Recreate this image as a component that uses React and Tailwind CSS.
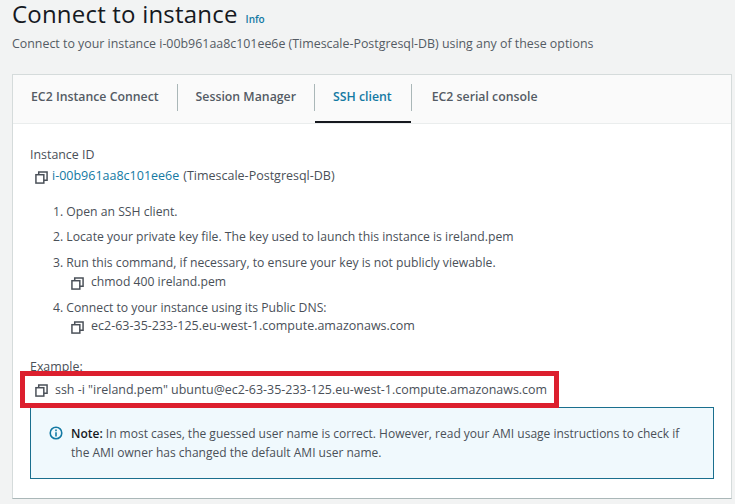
const F = { fontFamily: '"Open Sans", sans-serif' };

function CopyIcon({ className = "" }) {
  return (
    <svg viewBox="0 0 14 14" className={`w-[13px] h-[13px] shrink-0 ${className}`} fill="none" stroke="#4a5058" strokeWidth="1.6">
      <rect x="1" y="4" width="8.5" height="9" />
      <path d="M4 4V1h9v9h-3.5" />
    </svg>
  );
}

function CopyLine({ children, className = "" }) {
  return (
    <div className={`flex items-center gap-[7px] ml-[18px] h-[18px] ${className}`}>
      <CopyIcon className="mt-[2px]" />
      <span>{children}</span>
    </div>
  );
}

function Tab({ children, active, className = "px-[18px]" }) {
  return (
    <div className={`h-full flex items-center pb-[2px] border-b-2 text-[12.3px] font-semibold ${className} ${active ? "text-[#1379a3] border-[#16191f]" : "text-[#545b64] border-transparent"}`}>
      {children}
    </div>
  );
}

const Sep = () => <div className="w-px h-[27px] mb-[3px] bg-[#aab7b8]" />;

export default function App() {
  return (
    <div style={F} className="w-[735px] h-[504px] overflow-hidden bg-[#f2f3f3] text-[#545b64] text-[12.4px] pl-[12px] pr-[3px]">
      <div className="flex items-baseline h-[27px]">
        <h1 className="text-[24px] leading-[27px] text-[#16191f] tracking-[0.2px]">Connect to instance</h1>
        <a className="ml-[8px] text-[10px] font-semibold text-[#1379a3]">Info</a>
      </div>
      <p className="mt-[8px] leading-[17px] whitespace-nowrap">
        Connect to your instance i-00b961aa8c101ee6e (Timescale-Postgresql-DB) using any of these options
      </p>
      <div className="mt-[22px] h-[425px] bg-white border border-[#d5dbdb] border-b-[#aab7b8] flex flex-col">
        <div className="h-[49px] bg-[#fafafa] border-b border-[#eaeded] flex items-center shrink-0">
          <Tab>EC2 Instance Connect</Tab>
          <Sep />
          <Tab>Session Manager</Tab>
          <Sep />
          <Tab active className="pl-[18px] pr-[19px]">SSH client</Tab>
          <Sep />
          <Tab className="pl-[20px] pr-[18px]">EC2 serial console</Tab>
        </div>
        <div className="px-[17px] pt-[22px] flex-1 flex flex-col leading-[18px] text-[#4a5058]">
          <div>Instance ID</div>
          <div className="flex items-center gap-[4px] ml-[5px] mt-[3px] h-[18px] text-[12.5px]">
            <CopyIcon className="mt-[2px]" />
            <span className="text-[#1379a3]">i-00b961aa8c101ee6e</span>
            <span>(Timescale-Postgresql-DB)</span>
          </div>
          <ol className="ml-[23px] mt-[18px] flex flex-col gap-[7px] text-[12.2px]">
            <li>1. Open an SSH client.</li>
            <li>2. Locate your private key file. The key used to launch this instance is ireland.pem</li>
            <li className="mt-px">
              3. Run this command, if necessary, to ensure your key is not publicly viewable.
              <CopyLine className="mt-px">chmod 400 ireland.pem</CopyLine>
            </li>
            <li className="mt-px">
              4. Connect to your instance using its Public DNS:
              <CopyLine className="text-[12.5px]">ec2-63-35-233-125.eu-west-1.compute.amazonaws.com</CopyLine>
            </li>
          </ol>
          <div className="mt-[24px] h-[15px] leading-[15px]">Example:</div>
          <div className="relative z-10 -ml-[10px] w-[539px] h-[37px] border-[5px] border-[#dc1f2e] bg-white flex items-center pl-[10px] gap-[7px] -mt-[3px] text-[12.45px]">
            <CopyIcon className="mt-[2px]" />
            <span className="whitespace-nowrap">ssh -i "ireland.pem" ubuntu@ec2-63-35-233-125.eu-west-1.compute.amazonaws.com</span>
          </div>
          <div className="w-[684px] h-[72px] -mt-px border border-[#1a6f8e] bg-[#f0f9fd] flex pl-[18px] pt-[16px] gap-[8px] leading-[19px] text-[12px]">
            <svg viewBox="0 0 16 16" className="w-[14px] h-[14px] mt-[2px] shrink-0" fill="none" stroke="#1379a3" strokeWidth="1.8">
              <circle cx="8" cy="8" r="6.6" />
              <path d="M8 7v5M8 4v2" />
            </svg>
            <p className="w-[620px]">
              <b className="font-semibold text-[#16191f]">Note:</b> In most cases, the guessed user name is correct. However, read your AMI usage instructions to check if the AMI owner has changed the default AMI user name.
            </p>
          </div>
        </div>
      </div>
    </div>
  );
}
